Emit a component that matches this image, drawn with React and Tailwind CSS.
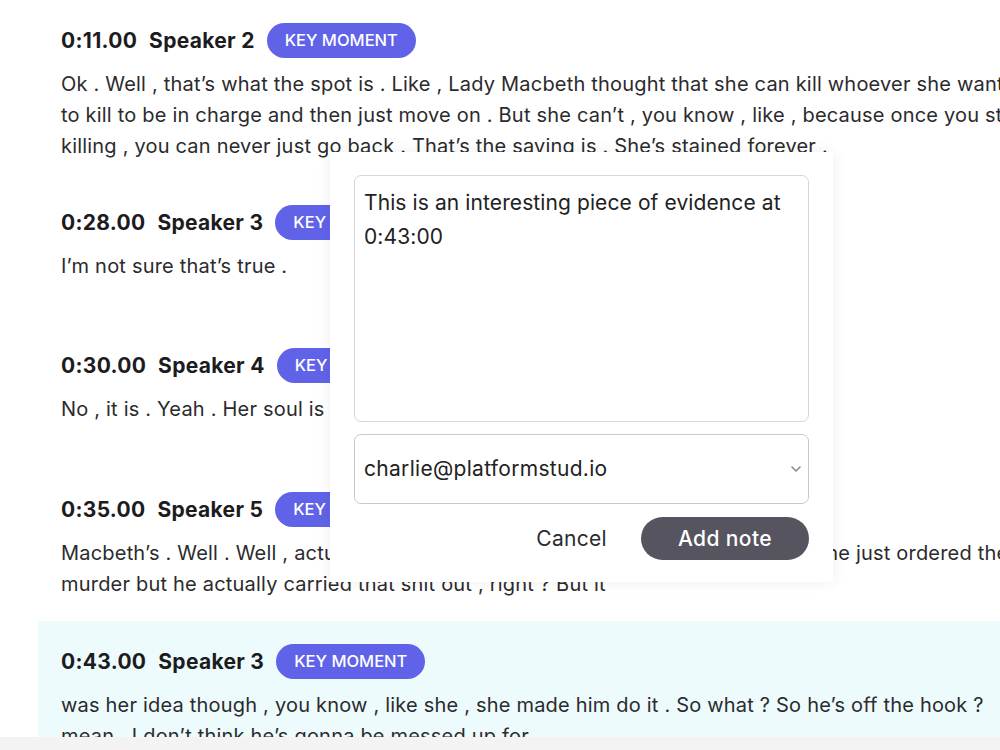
import { useState } from "react";

const blocks = [
  {
    time: "0:11.00",
    speaker: "Speaker 2",
    box: "pb-[20px]",
    lines: [
      "Ok . Well , that’s what the spot is . Like , Lady Macbeth thought that she can kill whoever she wants",
      "to kill to be in charge and then just move on . But she can’t , you know , like , because once you start",
      "killing , you can never just go back . That’s the saying is . She’s stained forever .",
    ],
  },
  { time: "0:28.00", speaker: "Speaker 3", box: "min-h-[143px]", lines: ["I’m not sure that’s true ."] },
  { time: "0:30.00", speaker: "Speaker 4", box: "min-h-[144px]", lines: ["No , it is . Yeah . Her soul is forever stained ."] },
  {
    time: "0:35.00",
    speaker: "Speaker 5",
    box: "pb-[21px]",
    lines: [
      "Macbeth’s . Well . Well , actually , I think it’s way worse for Macbeth , because she just ordered the",
      "murder but he actually carried that shit out , right ? But it",
    ],
  },
  {
    time: "0:43.00",
    speaker: "Speaker 3",
    box: "pb-[21px] bg-[#edfbfd]",
    lines: [
      "was her idea though , you know , like she , she made him do it . So what ? So he’s off the hook ?",
      "mean , I don’t think he’s gonna be messed up for",
    ],
  },
];

function Block({ block }) {
  return (
    <div className={"px-[23px] pt-[23px] " + block.box}>
      <div className="flex items-center h-[35px] text-[21px] font-bold tracking-[0.3px] text-[#1c1c1e]">
        <span>{block.time}</span>
        <span className="ml-[12px]">{block.speaker}</span>
        <span className="ml-[12px] h-[35px] px-[18px] rounded-full bg-[#6063e8] text-white text-[16.5px] font-medium tracking-normal flex items-center">
          KEY MOMENT
        </span>
      </div>
      <div className="mt-[11px] text-[20px] leading-[31px] tracking-[0.2px] text-[#2b2b2d] whitespace-nowrap">
        {block.lines.map((line, i) => (
          <div key={i}>{line}</div>
        ))}
      </div>
    </div>
  );
}

export default function App() {
  const [note, setNote] = useState("This is an interesting piece of evidence at 0:43:00");

  return (
    <div
      className="relative w-[1000px] h-[750px] overflow-hidden bg-white"
      style={{ fontFamily: "Inter, 'Noto Sans', sans-serif" }}
    >
      <div className="h-[737px] overflow-hidden">
        <div className="ml-[38px] w-[1100px] flex flex-col">
          {blocks.map((b, i) => (
            <Block key={i} block={b} />
          ))}
        </div>
      </div>
      <div className="h-[13px] bg-[#f3f3f4]" />

      {/* add note popover */}
      <div className="absolute left-[330px] top-[152px] w-[503px] h-[430px] bg-white shadow-[0_0_14px_rgba(0,0,0,0.07)] px-[24px] pt-[23px]">
        <textarea
          value={note}
          onChange={(e) => setNote(e.target.value)}
          className="block w-full h-[247px] resize-none rounded-[7px] border border-[#d6d6d8] px-[9px] pt-[10px] pb-[9px] text-[21px] leading-[34px] tracking-[0.1px] text-[#222] outline-none"
        />
        <div className="relative mt-[12px]">
          <select className="appearance-none block w-full h-[70px] rounded-[7px] border border-[#c9c9cc] bg-white px-[9px] text-[21px] tracking-[0.3px] text-[#222] outline-none">
            <option>charlie@platformstud.io</option>
          </select>
          <svg
            className="absolute right-[7px] top-[31px] pointer-events-none"
            width="12"
            height="8"
            viewBox="0 0 12 8"
            fill="none"
          >
            <path d="M2 2l4 4 4-4" stroke="#8a8a8e" strokeWidth="1.6" strokeLinecap="round" strokeLinejoin="round" />
          </svg>
        </div>
        <div className="mt-[13px] flex items-center justify-end">
          <button className="text-[21px] tracking-[0.3px] text-[#2b2b2d] mr-[34px]">Cancel</button>
          <button className="w-[168px] h-[43px] rounded-full bg-[#55545f] text-white text-[21px] tracking-[0.4px] font-medium">
            Add note
          </button>
        </div>
      </div>
    </div>
  );
}
